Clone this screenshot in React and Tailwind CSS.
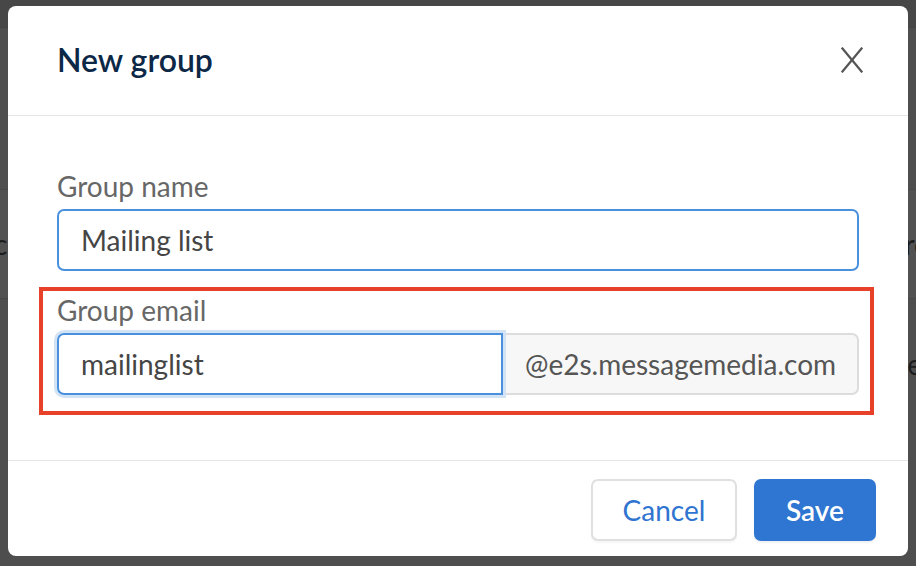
import React from 'react';

const font = "font-['Lato','Noto_Sans',sans-serif]";

const CloseIcon = () => (
  <svg width="22" height="26" viewBox="0 0 22 26" fill="none" stroke="#555" strokeWidth="2.2" strokeLinecap="square">
    <path d="M1.5 1.5 L20.5 24.5" />
    <path d="M20.5 1.5 L1.5 24.5" />
  </svg>
);

const Backdrop = () => (
  <div className={`h-[566px] w-[916px] bg-[#4e4e4e] text-[28px] text-[#1c1c1c] ${font} overflow-hidden`}>
    <div className="h-[27px] bg-[#474747]" />
    <div className="h-[162px] border-t border-[#444]" />
    <div className="h-[109px] border-t border-[#484848] bg-[#525252] flex items-center justify-between">
      <span className="-ml-[6px]">c</span>
      <span className="-mr-[14px]">ro</span>
    </div>
    <div className="h-[130px] border-t border-[#474747] flex items-center justify-end">
      <span className="-mr-[6px]">e</span>
    </div>
  </div>
);

export default function App() {
  return (
    <div className={`relative w-[916px] h-[566px] overflow-hidden ${font}`}>
      <Backdrop />

      {/* modal */}
      <div className="absolute left-[8px] top-[6px] w-[900px] h-[550px] bg-white rounded-[8px] flex flex-col">
        <header className="h-[110px] flex items-center justify-between pl-[49px] pr-[45px] border-b border-[#e6e6e6]">
          <h2 className="text-[32px] font-semibold text-[#0c2846] leading-none -mt-[2px]">New group</h2>
          <button className="-mt-[2px]"><CloseIcon /></button>
        </header>

        <div className="px-[49px] pt-[53px] pb-[45px] border-b border-[#e6e6e6]">
          <label className="block text-[28px] leading-[34px] text-[#676767]">Group name</label>
          <div className="mt-[6px] h-[62px] rounded-[7px] border-2 border-[#4a90dc] flex items-center px-[22px] text-[28px] text-[#454545]">
            Mailing list
          </div>

          <div className="mt-[16px] -ml-[18px] -mr-[15px] border-4 border-[#e8412a] pl-[14px] pr-[11px] pt-[2px] pb-[16px]">
            <label className="block text-[28px] leading-[34px] text-[#676767]">Group email</label>
            <div className="mt-[6px] flex h-[62px]">
              <div className="w-[446px] h-full rounded-l-[7px] border-2 border-[#4a90dc] shadow-[0_0_0_3px_#d3e3f6] flex items-center px-[22px] text-[28px] text-[#454545] relative z-10">
                mailinglist
              </div>
              <div className="flex-1 h-full rounded-r-[7px] border-2 border-l-0 border-[#dcdcdc] bg-[#f7f7f7] flex items-center pl-[22px] text-[28px] text-[#555]">
                @e2s.messagemedia.com
              </div>
            </div>
          </div>
        </div>

        <footer className="flex-1 flex justify-end items-start pt-[18px] pr-[32px] gap-[17px]">
          <button className="w-[146px] h-[62px] rounded-[7px] border-2 border-[#e0e0e0] bg-white text-[28px] text-[#2f74d0] shadow-[0_2px_2px_rgba(0,0,0,0.04)]">
            Cancel
          </button>
          <button className="w-[122px] h-[62px] rounded-[7px] bg-[#2f76d2] text-[28px] font-semibold text-white shadow-[0_2px_2px_rgba(0,0,0,0.06)]">
            Save
          </button>
        </footer>
      </div>
    </div>
  );
}
